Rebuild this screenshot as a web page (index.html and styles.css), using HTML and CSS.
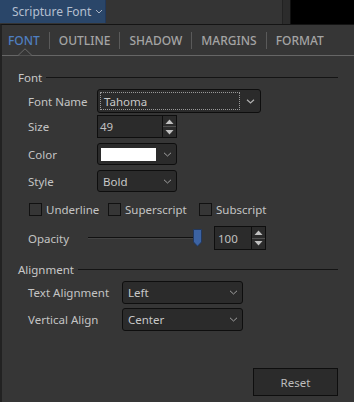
FILE: index.html
```html
<!DOCTYPE html>
<html>
<head>
<meta charset="utf-8">
<link rel="stylesheet" href="styles.css">
</head>
<body>
<div class="topbar">
  <div class="doc-tab">Scripture Font <svg class="chev-s" width="8" height="5" viewBox="0 0 8 5"><path d="M1 1 L4 4 L7 1" fill="none" stroke="#aab4c4" stroke-width="1"/></svg></div>
  <div class="top-fill"></div>
  <div class="top-sep"></div>
  <div class="top-black"></div>
</div>
<div class="panel">
  <div class="tabs">
    <div class="tab active">FONT</div>
    <div class="tab-sep"></div>
    <div class="tab">OUTLINE</div>
    <div class="tab-sep"></div>
    <div class="tab">SHADOW</div>
    <div class="tab-sep"></div>
    <div class="tab">MARGINS</div>
    <div class="tab-sep"></div>
    <div class="tab">FORMAT</div>
  </div>
  <div class="tab-line">
    <svg class="notch" width="14" height="8" viewBox="0 0 14 8"><path d="M0 7.5 L7 0.8 L14 7.5" fill="#363636" stroke="#6a6a6a" stroke-width="1"/></svg>
  </div>

  <div class="group">
    <div class="group-head"><span>Font</span><div class="rule"></div></div>
    <div class="row r-fontname">
      <div class="label">Font Name</div>
      <div class="combo w-fontname"><div class="combo-text focus">Tahoma</div><div class="combo-arrow"><svg width="9" height="5" viewBox="0 0 9 5"><path d="M1 0.8 L4.5 4 L8 0.8" fill="none" stroke="#b0b0b0" stroke-width="1.2"/></svg></div></div>
    </div>
    <div class="row r-size">
      <div class="label">Size</div>
      <div class="spin w-size"><div class="spin-text">49</div><div class="spin-btns"><div class="spin-up"><svg width="9" height="5" viewBox="0 0 9 5"><path d="M0.5 5 L4.5 0.5 L8.5 5 Z" fill="#c0c0c0"/></svg></div><div class="spin-down"><svg width="9" height="5" viewBox="0 0 9 5"><path d="M0.5 0 L4.5 4.5 L8.5 0 Z" fill="#c0c0c0"/></svg></div></div></div>
    </div>
    <div class="row r-color">
      <div class="label">Color</div>
      <div class="combo w-small"><div class="combo-text"><div class="swatch"></div></div><div class="combo-arrow"><svg width="9" height="5" viewBox="0 0 9 5"><path d="M1 0.8 L4.5 4 L8 0.8" fill="none" stroke="#a0a0a0" stroke-width="1"/></svg></div></div>
    </div>
    <div class="row r-style">
      <div class="label">Style</div>
      <div class="combo w-small"><div class="combo-text">Bold</div><div class="combo-arrow"><svg width="9" height="5" viewBox="0 0 9 5"><path d="M1 0.8 L4.5 4 L8 0.8" fill="none" stroke="#a0a0a0" stroke-width="1"/></svg></div></div>
    </div>
    <div class="checks">
      <div class="check c1"><div class="box"></div>Underline</div>
      <div class="check c2"><div class="box"></div>Superscript</div>
      <div class="check c3"><div class="box"></div>Subscript</div>
    </div>
    <div class="row r-opacity">
      <div class="label l-opacity">Opacity</div>
      <div class="slider"><div class="track"></div><svg class="thumb" width="11" height="18" viewBox="0 0 11 18"><path d="M1.5 0.5 H9.5 V13 L5.5 17.3 L1.5 13 Z" fill="#3c63a3" stroke="#22385e" stroke-width="1"/></svg></div>
      <div class="spin w-op"><div class="spin-text">100</div><div class="spin-btns"><div class="spin-up"><svg width="9" height="5" viewBox="0 0 9 5"><path d="M0.5 5 L4.5 0.5 L8.5 5 Z" fill="#c0c0c0"/></svg></div><div class="spin-down"><svg width="9" height="5" viewBox="0 0 9 5"><path d="M0.5 0 L4.5 4.5 L8.5 0 Z" fill="#c0c0c0"/></svg></div></div></div>
    </div>
  </div>

  <div class="group g2">
    <div class="group-head"><span>Alignment</span><div class="rule"></div></div>
    <div class="row r-talign">
      <div class="label l-wide">Text Alignment</div>
      <div class="combo w-align"><div class="combo-text">Left</div><div class="combo-arrow"><svg width="9" height="5" viewBox="0 0 9 5"><path d="M1 0.8 L4.5 4 L8 0.8" fill="none" stroke="#a0a0a0" stroke-width="1"/></svg></div></div>
    </div>
    <div class="row r-valign">
      <div class="label l-wide">Vertical Align</div>
      <div class="combo w-align"><div class="combo-text">Center</div><div class="combo-arrow"><svg width="9" height="5" viewBox="0 0 9 5"><path d="M1 0.8 L4.5 4 L8 0.8" fill="none" stroke="#a0a0a0" stroke-width="1"/></svg></div></div>
    </div>
  </div>

  <div class="footer">
    <div class="btn">Reset</div>
  </div>
</div>
</body>
</html>
```

FILE: styles.css
```css
html, body {
  margin: 0;
  padding: 0;
}
body {
  width: 354px;
  height: 402px;
  overflow: hidden;
  background: #363636;
  font-family: "Noto Sans", "Open Sans", sans-serif;
  font-size: 11.5px;
  color: #c4c4c4;
}
.topbar {
  display: flex;
  height: 24px;
  background: #343434;
}
.doc-tab {
  width: 106px;
  height: 23px;
  background: #2a4669;
  color: #b4bfcf;
  font-size: 12px;
  white-space: nowrap;
  display: flex;
  align-items: center;
  padding-left: 12px;
  box-sizing: border-box;
  gap: 4px;
  border-right: 1px solid #22385a;
}
.top-fill {
  flex: 1;
}
.top-sep {
  width: 7px;
  background: #2c2c2c;
  border-left: 1px solid #222;
  border-right: 1px solid #111;
}
.top-black {
  width: 63px;
  background: #000;
}
.panel {
  border-top: 1px solid #141414;
  border-left: 2px solid #222;
  height: 377px;
  display: flex;
  flex-direction: column;
}
.tabs {
  display: flex;
  align-items: center;
  height: 30px;
  padding-left: 4px;
}
.tab {
  font-size: 12px;
  font-weight: 500;
  color: #a4a4a4;
  padding: 0 2px;
}
.tab.active {
  color: #4f7fc0;
}
.tab-sep {
  width: 1px;
  height: 17px;
  background: #5a5a5a;
  margin: 0 7px;
}
.tab-line {
  height: 1px;
  background: #666;
  position: relative;
}
.notch {
  position: absolute;
  left: 16px;
  top: -7px;
}
.group {
  padding: 13px 16px 0 16px;
}
.g2 {
  padding-top: 11px;
}
.group-head {
  display: flex;
  align-items: center;
  gap: 4px;
  height: 16px;
  color: #c8c8c8;
}
.rule {
  flex: 1;
  height: 1px;
  background: #141414;
}
.row {
  display: flex;
  align-items: center;
  margin-left: 10px;
}
.label {
  width: 69px;
  color: #c4c4c4;
}
.l-wide {
  width: 94px;
}
.r-fontname { margin-top: 4px; }
.r-size { margin-top: 2px; }
.r-color { margin-top: 5px; }
.r-style { margin-top: 5px; }
.combo {
  height: 23px;
  box-sizing: border-box;
  border: 1px solid #0e0e0e;
  border-radius: 3px;
  background: #2b2b2b;
  display: flex;
  align-items: stretch;
}
.w-fontname { width: 164px; height: 24px; }
.w-small { width: 80px; height: 22px; }
.w-align { width: 121px; height: 23px; }
.combo-text {
  flex: 1;
  display: flex;
  align-items: center;
  padding-left: 5px;
  color: #c8c8c8;
}
.combo-text.focus {
  margin: 2px 0 2px 2px;
  padding-left: 3px;
  border: 1px dotted #999;
}
.combo-arrow {
  width: 18px;
  display: flex;
  align-items: center;
  justify-content: center;
}
.w-fontname .combo-arrow { width: 20px; }
.swatch {
  width: 55px;
  height: 13px;
  background: #fff;
  margin-left: -2px;
}
.spin {
  height: 23px;
  box-sizing: border-box;
  border: 1px solid #0e0e0e;
  background: #2b2b2b;
  display: flex;
}
.w-size { width: 80px; }
.w-op { width: 52px; height: 24px; }
.spin-text {
  flex: 1;
  display: flex;
  align-items: center;
  padding-left: 2px;
  color: #c0c0c0;
}
.w-op .spin-text { padding-left: 3px; }
.spin-btns {
  width: 13px;
  border-left: 1px solid #0e0e0e;
  display: flex;
  flex-direction: column;
}
.spin-up, .spin-down {
  flex: 1;
  display: flex;
  align-items: center;
  justify-content: center;
}
.spin-up { border-bottom: 1px solid #505050; }
.checks {
  display: flex;
  align-items: center;
  margin-left: 11px;
  margin-top: 10px;
  height: 14px;
}
.check {
  display: flex;
  align-items: center;
  gap: 4px;
  color: #c4c4c4;
}
.c1 { width: 79px; }
.c2 { width: 91px; }
.box {
  width: 11px;
  height: 11px;
  border: 1px solid #111;
  background: #363636;
}
.r-opacity {
  margin-top: 10px;
  height: 24px;
}
.l-opacity {
  width: 60px;
}
.slider {
  width: 116px;
  height: 20px;
  position: relative;
  margin-right: 10px;
}
.track {
  position: absolute;
  left: 0;
  right: 8px;
  top: 9px;
  height: 1px;
  background: #111;
  border-bottom: 1px solid #444;
}
.thumb {
  position: absolute;
  left: 104px;
  top: 1px;
}
.r-talign { margin-top: 4px; }
.r-valign { margin-top: 4px; }
.footer {
  flex: 1;
  display: flex;
  justify-content: flex-end;
  align-items: flex-end;
  padding: 0 16px 6px 0;
}
.btn {
  width: 85px;
  height: 28px;
  box-sizing: border-box;
  border: 1px solid #0e0e0e;
  background: #2b2b2b;
  color: #bdbdbd;
  display: flex;
  align-items: center;
  justify-content: center;
}
```
